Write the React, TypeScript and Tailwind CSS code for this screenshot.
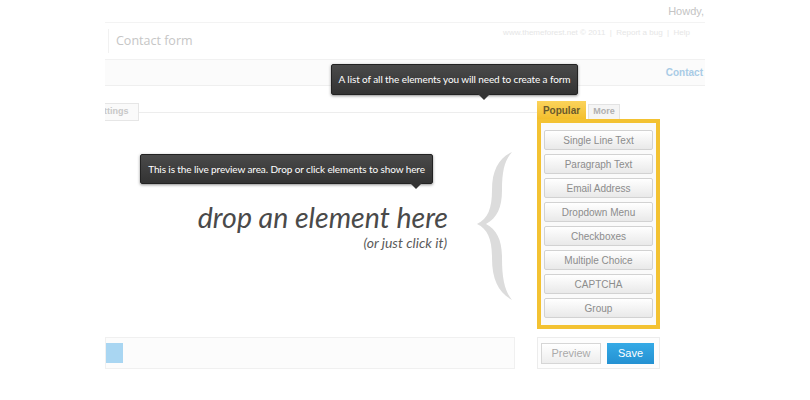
import React from "react";

const elements = [
  "Single Line Text",
  "Paragraph Text",
  "Email Address",
  "Dropdown Menu",
  "Checkboxes",
  "Multiple Choice",
  "CAPTCHA",
  "Group",
];

function Tooltip({ text, className, arrowClass }: { text: string; className: string; arrowClass: string }) {
  return (
    <div
      className={`absolute z-10 flex items-center justify-center whitespace-nowrap rounded-[2px] border border-[#222] bg-gradient-to-b from-[#4a4a4a] to-[#333] text-[10px] tracking-[-0.1px] text-white shadow-[0_1px_3px_rgba(0,0,0,0.45)] ${className}`}
      style={{ fontFamily: "Lato, sans-serif" }}
    >
      {text}
      <span className={`absolute top-full h-0 w-0 border-x-[6px] border-t-[6px] border-x-transparent border-t-[#333] ${arrowClass}`} />
    </div>
  );
}

function Brace() {
  return (
    <svg width="40" height="152" viewBox="0 0 40 152" className="block">
      <path
        d="M37 2 C24 8 17 20 17 40 C17 58 13 69 2 74 C13 79 17 90 17 108 C17 130 24 143 37 150 C30 141 27 130 27 108 C27 90 22 80 11 74 C22 68 27 58 27 40 C27 20 30 10 37 2 Z"
        fill="#dcdcdc"
      />
    </svg>
  );
}

export default function App() {
  return (
    <div className="relative h-[400px] w-[810px] overflow-hidden bg-white" style={{ fontFamily: "'Liberation Sans', Arial, sans-serif" }}>
      <Tooltip
        text="A list of all the elements you will need to create a form"
        className="left-[331px] top-[64px] h-[31px] w-[247px]"
        arrowClass="left-[146px]"
      />
      <Tooltip
        text="This is the live preview area. Drop or click elements to show here"
        className="left-[140px] top-[154px] h-[30px] w-[293px]"
        arrowClass="left-[269px]"
      />

      <div className="ml-[105px] w-[600px] overflow-hidden">
        {/* admin header */}
        <div className="flex h-[23px] items-center justify-end border-b border-[#f3f3f3] text-[11px] text-[#c4c4c4]">
          <span className="mr-px">Howdy,</span>
        </div>
        <div className="flex h-[37px] items-center justify-between border-b border-[#f1f1f1]">
          <div className="flex items-center">
            <span className="ml-[3px] h-[24px] w-px bg-[#f1f1f1]" />
            <span className="ml-[7px] text-[12.5px] text-[#c6c6c6]" style={{ fontFamily: "'Open Sans', sans-serif" }}>
              Contact form
            </span>
          </div>
          <span className="mr-[15px] -translate-y-[8px] text-[8px] text-[#e6e6e6]">
            www.themeforest.net © 2011 &nbsp;|&nbsp; Report a bug &nbsp;|&nbsp; Help
          </span>
        </div>
        <div className="flex h-[26px] items-center justify-end border-b border-[#efefef] bg-[#fbfbfb] pr-[2px]">
          <span className="text-[10px] font-bold text-[#a9cbe6]">Contact</span>
        </div>

        <div className="flex">
          {/* preview column */}
          <div className="w-[432px]">
            <div className="mt-[17px] flex h-[18px] items-center">
              <div className="-ml-[22px] flex h-[18px] items-center border border-[#e6e6e6] bg-[#fafafa] px-[9px] text-[9px] font-bold text-[#c8c8c8]">
                Settings
              </div>
              <div className="h-px flex-1 bg-[#ededed]" />
            </div>
            <div className="flex h-[216px] w-[410px] items-start">
              <div className="mt-[80px] flex w-[342px] flex-col items-end text-[#4a4a4a]" style={{ fontFamily: "Lato, sans-serif" }}>
                <span className="translate-x-[4px] text-[28.5px] italic leading-[32px]">drop an element here</span>
                <span className="mt-[1px] translate-x-[3px] text-[14px] italic leading-[17px] text-[#5a5a5a]">(or just click it)</span>
              </div>
              <div className="ml-[31px] mt-[29px]">
                <Brace />
              </div>
            </div>
            <div className="flex h-[32px] w-[410px] items-center border border-[#f0f0f0] bg-[#fcfcfc]">
              <span className="h-[20px] w-[17px] bg-[#a9d6f2]" />
            </div>
          </div>

          {/* elements column */}
          <div className="w-[123px]">
            <div className="mt-[15px] flex h-[18px] items-end">
              <div className="flex h-[18px] w-[49px] items-center justify-center bg-gradient-to-b from-[#fbd35a] to-[#f3bf2c] text-[10px] font-bold text-[#6b5a2c]">
                Popular
              </div>
              <div className="ml-[2px] flex h-[15px] w-[32px] items-center justify-center border border-b-0 border-[#e3e3e3] bg-[#f5f5f5] text-[9px] font-bold text-[#b0b0b0]">
                More
              </div>
            </div>
            <div className="flex flex-col gap-[4px] border-[4px] border-[#f3c232] bg-[#fafafa] px-[3px] py-[7px]">
              {elements.map((label) => (
                <div
                  key={label}
                  className="flex h-[20px] items-center justify-center rounded-[2px] border border-[#d2d2d2] bg-gradient-to-b from-white to-[#e9e9e9] text-[10px] text-[#8c8c8c]"
                >
                  {label}
                </div>
              ))}
            </div>
            <div className="mt-[8px] flex h-[32px] items-center gap-[6px] border border-[#ececec] bg-[#fdfdfd] px-[3px]">
              <div className="flex h-[21px] w-[60px] items-center justify-center border border-[#d6d6d6] bg-gradient-to-b from-white to-[#ededed] text-[11px] text-[#aaaaaa]">
                Preview
              </div>
              <div className="flex h-[21px] w-[47px] items-center justify-center bg-gradient-to-b from-[#35aae6] to-[#2491d2] text-[11px] text-white">
                Save
              </div>
            </div>
          </div>
        </div>
      </div>
    </div>
  );
}
